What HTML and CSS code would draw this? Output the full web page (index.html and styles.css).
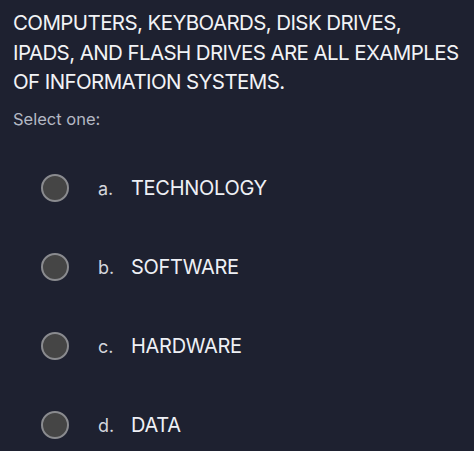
FILE: index.html
```html
<!DOCTYPE html>
<html lang="en">
<head>
  <meta charset="UTF-8">
  <title>Question</title>
  <link rel="stylesheet" href="styles.css">
</head>
<body>
  <div class="question">
    <p class="question-text">COMPUTERS, KEYBOARDS, DISK DRIVES,<br>IPADS, AND FLASH DRIVES ARE ALL EXAMPLES<br>OF INFORMATION SYSTEMS.</p>
    <p class="prompt">Select one:</p>
    <div class="answers">
      <label class="answer"><span class="radio"></span><span class="letter">a.</span><span class="answer-text">TECHNOLOGY</span></label>
      <label class="answer"><span class="radio"></span><span class="letter">b.</span><span class="answer-text">SOFTWARE</span></label>
      <label class="answer"><span class="radio"></span><span class="letter">c.</span><span class="answer-text">HARDWARE</span></label>
      <label class="answer"><span class="radio"></span><span class="letter">d.</span><span class="answer-text">DATA</span></label>
    </div>
  </div>
</body>
</html>
```

FILE: styles.css
```css
/* page */
body {
  margin: 0;
  background: #1e2130;
  font-family: Inter, "Noto Sans", sans-serif;
  color: #f2f3f6;
  width: 474px;
  height: 451px;
  overflow: hidden;
}

.question {
  padding: 8px 0 0 13px;
}

.question-text {
  margin: 0;
  white-space: nowrap;
  font-size: 20.5px;
  line-height: 29.5px;
  letter-spacing: -0.6px;
}

.prompt {
  margin: 12.5px 0 0;
  font-size: 16.5px;
  color: #b4b8c4;
}

/* answer list */
.answers {
  display: flex;
  flex-direction: column;
  gap: 51px;
  margin-top: 45px;
  padding-left: 28px;
}

.answer {
  display: flex;
  align-items: center;
  height: 28px;
}

.radio {
  width: 24px;
  height: 24px;
  border: 2px solid #8a8b8f;
  border-radius: 50%;
  background: #454545;
}

.letter {
  margin-left: 29px;
  width: 33px;
  font-size: 18px;
  color: #d4d6dd;
}

.answer-text {
  font-size: 20px;
  letter-spacing: -0.3px;
  color: #eef0f5;
}
```
